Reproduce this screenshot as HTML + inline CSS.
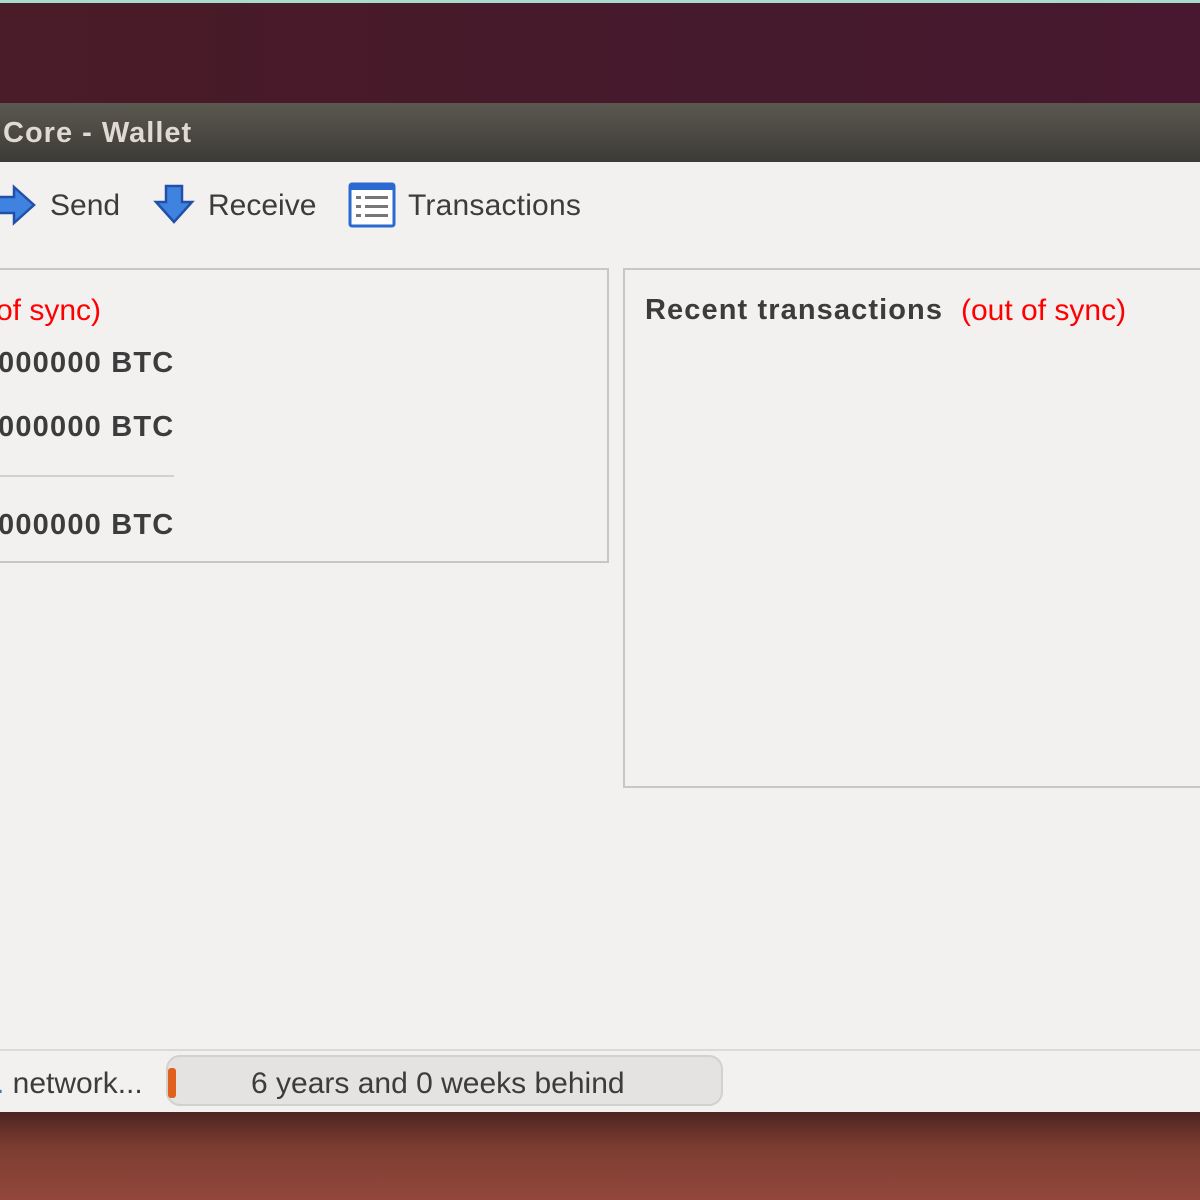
<!DOCTYPE html>
<html><head><meta charset="utf-8"><style>
*{margin:0;padding:0;box-sizing:border-box}
body{width:1200px;height:1200px;overflow:hidden;position:relative;font-family:"Liberation Sans",sans-serif;background:#f2f1f0}
.abs{position:absolute}
.t{position:absolute;white-space:nowrap;color:#3c3c3c}
</style></head><body>
<div class="abs" style="left:0;top:0;width:1200px;height:103px;background:linear-gradient(90deg,#4a1b28,#451a2c 60%,#47182f)"></div>
<div class="abs" style="left:0;top:0;width:1200px;height:3px;background:#a8dccc"></div>
<div class="abs" style="left:0;top:103px;width:1200px;height:59px;background:linear-gradient(#5b5850,#3d3b36)"></div>
<div class="t" style="left:3px;top:117px;font-size:29px;font-weight:bold;color:#dfdbd2;letter-spacing:1px">Core - Wallet</div>
<svg class="abs" style="left:0;top:184px" width="40" height="44" viewBox="0 0 40 44"><path d="M-4 13 H14 V3 L34 21 L14 39 V29 H-4 Z" fill="#3f82e0" stroke="#2150a8" stroke-width="2.5"/></svg>
<div class="t" style="left:50px;top:189px;font-size:30px">Send</div>
<svg class="abs" style="left:152px;top:184px" width="44" height="42" viewBox="0 0 44 42"><path d="M14 2 H30 V18 H40 L22 38 L4 18 H14 Z" fill="#3f82e0" stroke="#2150a8" stroke-width="2.5"/></svg>
<div class="t" style="left:208px;top:189px;font-size:30px">Receive</div>
<svg class="abs" style="left:348px;top:182px" width="48" height="46" viewBox="0 0 48 46"><rect x="2" y="2" width="44" height="42" rx="2" fill="#fff" stroke="#2a6ad0" stroke-width="3"/><rect x="2" y="2" width="44" height="6" fill="#2a6ad0"/><g fill="#777"><rect x="8" y="14" width="5" height="3"/><rect x="17" y="14" width="23" height="3"/><rect x="8" y="23" width="5" height="3"/><rect x="17" y="23" width="23" height="3"/><rect x="8" y="32" width="5" height="3"/><rect x="17" y="32" width="23" height="3"/></g></svg>
<div class="t" style="left:408px;top:189px;font-size:30px;letter-spacing:0.2px">Transactions</div>
<div class="abs" style="left:-2px;top:268px;width:611px;height:295px;border:2px solid #c9c7c3"></div>
<div class="t" style="left:-4px;top:294px;font-size:30px;color:#f00">of sync)</div>
<div class="t" style="left:-2px;top:347px;font-size:29px;font-weight:bold;letter-spacing:1.2px">000000 BTC</div>
<div class="t" style="left:-2px;top:411px;font-size:29px;font-weight:bold;letter-spacing:1.2px">000000 BTC</div>
<div class="abs" style="left:0;top:475px;width:174px;height:2px;background:#d4d2ce"></div>
<div class="t" style="left:-2px;top:509px;font-size:29px;font-weight:bold;letter-spacing:1.2px">000000 BTC</div>
<div class="abs" style="left:623px;top:268px;width:600px;height:520px;border:2px solid #c9c7c3"></div>
<div class="t" style="left:645px;top:294px;font-size:29px;font-weight:bold;letter-spacing:1.1px">Recent transactions</div>
<div class="t" style="left:961px;top:294px;font-size:30px;color:#f00">(out of sync)</div>
<div class="abs" style="left:0;top:1049px;width:1200px;height:2px;background:#dcdad6"></div>
<div class="t" style="left:-4px;top:1067px;font-size:30px"><span style="color:#3a78c0">.</span> network...</div>
<div class="abs" style="left:166px;top:1055px;width:557px;height:51px;border:2px solid #d3d1cd;border-radius:14px;background:#e4e3e1"></div>
<div class="abs" style="left:168px;top:1068px;width:8px;height:30px;background:#e0601e;border-radius:3px"></div>
<div class="t" style="left:251px;top:1067px;font-size:30px">6 years and 0 weeks behind</div>
<div class="abs" style="left:0;top:1112px;width:1200px;height:88px;background:linear-gradient(#4e2421,#7c3d30 40%,#93473c)"></div>
</body></html>
